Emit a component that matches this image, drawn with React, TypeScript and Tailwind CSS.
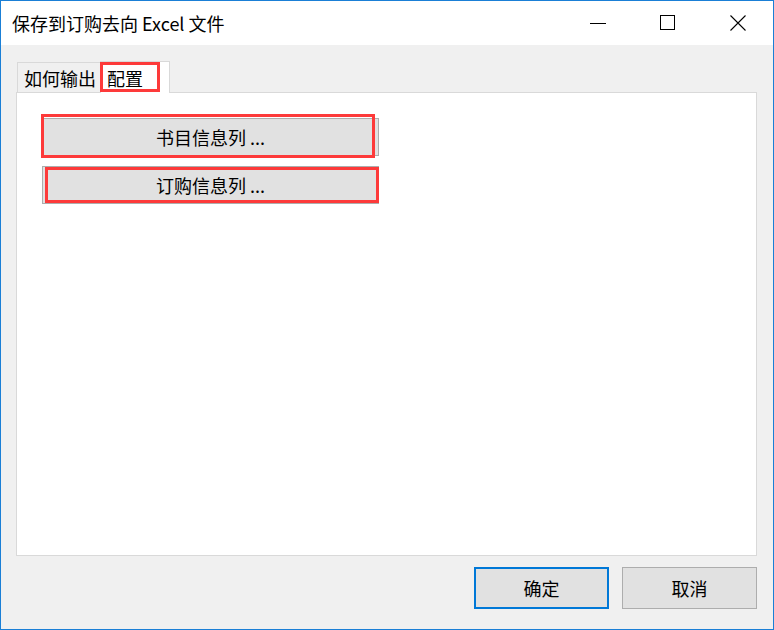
import React from 'react';

const font = { fontFamily: '"Noto Sans CJK SC", "Noto Sans", sans-serif' };

function CaptionButtons() {
  return (
    <div className="ml-auto flex h-full">
      <div className="flex w-[70px] items-center justify-center">
        <svg width="16" height="16" viewBox="0 0 16 16">
          <line x1="0" y1="8.5" x2="16" y2="8.5" stroke="#000" strokeWidth="1" />
        </svg>
      </div>
      <div className="flex w-[70px] items-center justify-center">
        <svg width="16" height="16" viewBox="0 0 16 16">
          <rect x="0.5" y="0.5" width="14" height="14" fill="none" stroke="#000" strokeWidth="1" />
        </svg>
      </div>
      <div className="flex w-[70px] items-center justify-center">
        <svg width="16" height="16" viewBox="0 0 16 16">
          <path d="M0.5 0.5 L15.5 15.5 M15.5 0.5 L0.5 15.5" stroke="#000" strokeWidth="1.1" fill="none" />
        </svg>
      </div>
    </div>
  );
}

export default function App() {
  return (
    <div
      className="relative flex h-[630px] w-[774px] flex-col border border-[#1a7fd6] bg-[#f0f0f0] text-black"
      style={font}
    >
      {/* title bar */}
      <div className="flex h-[44px] items-center bg-white">
        <span className="pl-[11px] text-[18px] leading-none">保存到订购去向 Excel 文件</span>
        <CaptionButtons />
      </div>

      <div className="flex flex-1 flex-col px-[15px] pt-[16px]">
        {/* tabs */}
        <div className="flex h-[31px] items-end pl-[1px]">
          <div className="flex h-[30px] w-[83px] items-center border-l border-t border-[#d9d9d9] bg-[#f0f0f0] pl-[6px] text-[18px] leading-none">
            如何输出
          </div>
          <div className="relative z-10 -mb-[1px] flex h-[32px] w-[70px] items-center border-x border-t border-[#d9d9d9] bg-white pl-[6px] text-[18px] leading-none">
            配置
          </div>
        </div>

        {/* panel */}
        <div className="flex h-[464px] w-[741px] flex-col gap-[10px] border border-[#d9d9d9] bg-white pl-[25px] pt-[25px]">
          <button className="flex h-[38px] w-[337px] items-center justify-center border border-[#adadad] bg-[#e1e1e1] text-[18px] leading-none">
            书目信息列 ...
          </button>
          <button className="flex h-[38px] w-[337px] items-center justify-center border border-[#adadad] bg-[#e1e1e1] text-[18px] leading-none">
            订购信息列 ...
          </button>
        </div>

        {/* footer buttons */}
        <div className="mt-[11px] flex justify-end gap-[13px] pr-[1px]">
          <button className="flex h-[42px] w-[135px] items-center justify-center border-2 border-[#0078d7] bg-[#e1e1e1] text-[18px] leading-none">
            确定
          </button>
          <button className="flex h-[42px] w-[135px] items-center justify-center border border-[#adadad] bg-[#e1e1e1] text-[18px] leading-none">
            取消
          </button>
        </div>
      </div>

      {/* red annotation boxes */}
      <div className="pointer-events-none absolute left-[99px] top-[61px] z-20 h-[30px] w-[60px] border-[3px] border-[#fd3a3a]" />
      <div className="pointer-events-none absolute left-[40px] top-[113px] z-20 h-[44px] w-[334px] border-[3px] border-[#fd3a3a]" />
      <div className="pointer-events-none absolute left-[44px] top-[166px] z-20 h-[36px] w-[334px] border-[3px] border-[#fd3a3a]" />
    </div>
  );
}
